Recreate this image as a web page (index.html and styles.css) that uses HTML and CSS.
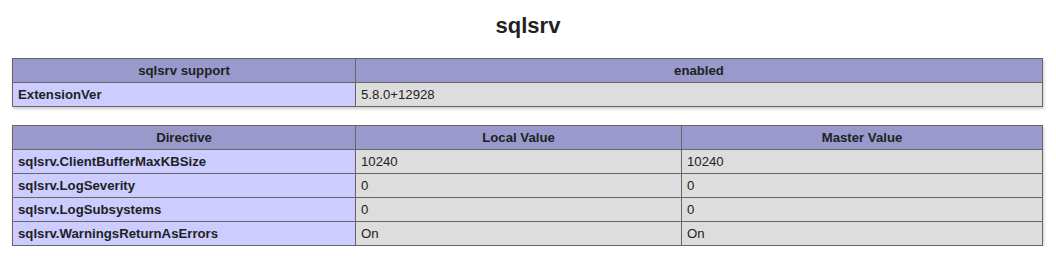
FILE: index.html
```html
<!DOCTYPE html>
<html>
<head>
<meta charset="utf-8">
<link rel="stylesheet" href="styles.css">
</head>
<body>
<div class="center">
<h2 class="title">sqlsrv</h2>
<table class="info first">
<colgroup><col class="c1"><col></colgroup>
<tr class="h"><th>sqlsrv support</th><th>enabled</th></tr>
<tr><td class="e">ExtensionVer</td><td class="v">5.8.0+12928</td></tr>
</table>
<table class="info second">
<colgroup><col class="c1"><col class="c2"><col></colgroup>
<tr class="h"><th>Directive</th><th>Local Value</th><th>Master Value</th></tr>
<tr><td class="e">sqlsrv.ClientBufferMaxKBSize</td><td class="v">10240</td><td class="v">10240</td></tr>
<tr><td class="e">sqlsrv.LogSeverity</td><td class="v">0</td><td class="v">0</td></tr>
<tr><td class="e">sqlsrv.LogSubsystems</td><td class="v">0</td><td class="v">0</td></tr>
<tr><td class="e">sqlsrv.WarningsReturnAsErrors</td><td class="v">On</td><td class="v">On</td></tr>
</table>
</div>
</body>
</html>
```
FILE: styles.css
```css
html, body {
  margin: 0;
  padding: 0;
  background: #fff;
}
body {
  color: #222;
  font-family: "Liberation Sans", Arial, sans-serif;
}
.center {
  text-align: center;
  padding-top: 13px;
}
.title {
  font-size: 22px;
  line-height: 25px;
  font-weight: bold;
  margin: 0 0 20px 0;
}
.info {
  border-collapse: collapse;
  table-layout: fixed;
  width: 1031px;
  margin: 0 0 0 12px;
  text-align: left;
  box-shadow: 1px 2px 3px #ccc;
}
.first {
  margin-bottom: 18px;
}
.c1 { width: 343px; }
.c2 { width: 326px; }
.info td, .info th {
  border: 1px solid #666;
  font-size: 13.2px;
  line-height: 15px;
  padding: 4px 5px;
  vertical-align: baseline;
}
.info th {
  text-align: center;
}
.h {
  background-color: #99c;
  font-weight: bold;
}
.e {
  background-color: #ccf;
  font-weight: bold;
}
.v {
  background-color: #ddd;
}
```
